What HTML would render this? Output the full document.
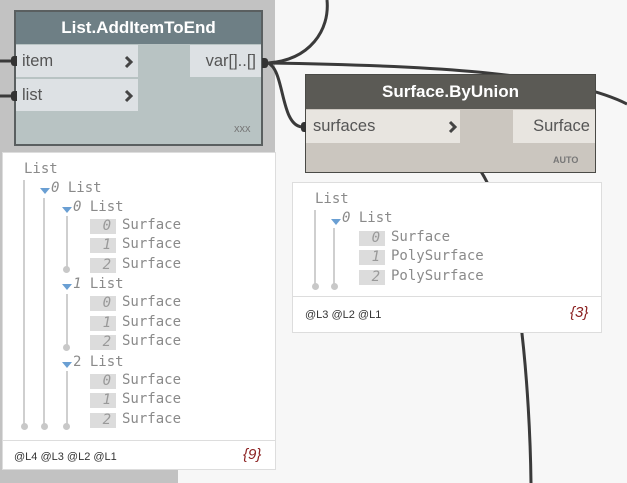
<!DOCTYPE html>
<html><head><style>
*{margin:0;padding:0;box-sizing:border-box}
body{width:627px;height:483px;overflow:hidden;background:#f7f7f7;position:relative;font-family:"Liberation Sans",sans-serif}
.a{position:absolute}
.mono{font-family:"DejaVu Sans Mono","Liberation Mono",monospace;font-size:14px;color:#8a8a8a;white-space:nowrap}
.idx{position:absolute;width:26px;height:15px;background:#dcdcdc;color:#999;font-style:italic;text-align:right;padding-right:5px;line-height:15px}
.vl{position:absolute;width:2px;background:#cfcfcf}
.dot{position:absolute;width:7px;height:7px;border-radius:50%;background:#c8c8c8}
.tri{position:absolute;width:0;height:0;border-left:5px solid transparent;border-right:5px solid transparent;border-top:6px solid #6a9fd3}
.chev{position:absolute}
.p{font-size:16.5px;color:#555}
</style></head><body>
<div class="a" style="left:0;top:0;width:275px;height:470px;background:#c2c2c2"></div>
<div class="a" style="left:0;top:0;width:178px;height:483px;background:#c2c2c2"></div>

<svg class="a" style="left:0;top:0" width="627" height="483">
<g fill="none" stroke="#3a3a3a" stroke-width="3">
<path d="M268 63 C310 60 330 30 327 0"/>
<path d="M268 63 C400 65 560 70 627 104"/>
<path d="M268 63 C285 70 280 125 302 127"/>
<path d="M480 170 C520 230 530 400 531 483"/>
<path d="M0 61 L15 61"/><path d="M0 96 L15 96"/>
</g>
</svg>

<!-- Node 1 -->
<div class="a" style="left:14px;top:10px;width:249px;height:136px;background:#b8c3c3;border:2px solid #5a5f60"></div>
<div class="a" style="left:16px;top:12px;width:245px;height:32px;background:#6e7f85;color:#fff;font-weight:bold;font-size:17px;text-align:center;line-height:32px">List.AddItemToEnd</div>
<div class="a p" style="left:16px;top:45px;width:122px;height:32px;background:#dde1e4;line-height:32px;padding-left:6px">item</div>
<div class="a p" style="left:16px;top:79px;width:122px;height:32px;background:#dde1e4;line-height:32px;padding-left:6px">list</div>
<svg class="chev" style="left:124px;top:55px" width="10" height="14"><polyline points="2,2 7,7 2,12" fill="none" stroke="#444" stroke-width="3"/></svg>
<svg class="chev" style="left:124px;top:89px" width="10" height="14"><polyline points="2,2 7,7 2,12" fill="none" stroke="#444" stroke-width="3"/></svg>
<div class="a p" style="left:190px;top:45px;width:71px;height:32px;background:#dde1e4;line-height:32px;text-align:right;padding-right:5px">var[]..[]</div>
<div class="a" style="left:234px;top:123px;font-size:11px;color:#777">xxx</div>
<div class="a" style="left:11px;top:56px;width:6px;height:10px;background:#333;border-radius:3px 0 0 3px"></div>
<div class="a" style="left:11px;top:91px;width:6px;height:10px;background:#333;border-radius:3px 0 0 3px"></div>
<div class="a" style="left:262px;top:58px;width:6px;height:10px;background:#333;border-radius:0 3px 3px 0"></div>

<!-- Preview 1 -->
<div class="a" style="left:2px;top:152px;width:274px;height:318px;background:#fff;border:1px solid #ddd"></div>
<div class="a" style="left:2px;top:440px;width:274px;height:1px;background:#ddd"></div>
<div class="mono">
<div class="a" style="left:24px;top:161px">List</div>
<div class="tri" style="left:40px;top:188px"></div><div class="a" style="left:51px;top:180px"><i>0</i> List</div>
<div class="tri" style="left:62px;top:207px"></div><div class="a" style="left:73px;top:199px"><i>0</i> List</div>
<div class="idx" style="left:90px;top:219px">0</div><div class="a" style="left:122px;top:217px">Surface</div>
<div class="idx" style="left:90px;top:238px">1</div><div class="a" style="left:122px;top:236px">Surface</div>
<div class="idx" style="left:90px;top:258px">2</div><div class="a" style="left:122px;top:256px">Surface</div>
<div class="tri" style="left:62px;top:284px"></div><div class="a" style="left:73px;top:276px"><i>1</i> List</div>
<div class="idx" style="left:90px;top:296px">0</div><div class="a" style="left:122px;top:294px">Surface</div>
<div class="idx" style="left:90px;top:316px">1</div><div class="a" style="left:122px;top:314px">Surface</div>
<div class="idx" style="left:90px;top:335px">2</div><div class="a" style="left:122px;top:333px">Surface</div>
<div class="tri" style="left:62px;top:362px"></div><div class="a" style="left:73px;top:354px">2 List</div>
<div class="idx" style="left:90px;top:374px">0</div><div class="a" style="left:122px;top:372px">Surface</div>
<div class="idx" style="left:90px;top:393px">1</div><div class="a" style="left:122px;top:391px">Surface</div>
<div class="idx" style="left:90px;top:413px">2</div><div class="a" style="left:122px;top:411px">Surface</div>
</div>
<div class="vl" style="left:23px;top:180px;height:246px"></div><div class="dot" style="left:21px;top:423px"></div>
<div class="vl" style="left:43px;top:198px;height:228px"></div><div class="dot" style="left:41px;top:423px"></div>
<div class="vl" style="left:66px;top:216px;height:52px"></div><div class="dot" style="left:63px;top:266px"></div>
<div class="vl" style="left:66px;top:294px;height:52px"></div><div class="dot" style="left:63px;top:344px"></div>
<div class="vl" style="left:66px;top:371px;height:55px"></div><div class="dot" style="left:63px;top:423px"></div>
<div class="a" style="left:14px;top:451px;font-size:11px;color:#333">@L4 @L3 @L2 @L1</div>
<div class="a" style="left:243px;top:446px;font-size:15px;font-style:italic;color:#8b2020">{9}</div>

<!-- Node 2 -->
<div class="a" style="left:305px;top:74px;width:291px;height:99px;background:#cbc6bf;border:1px solid #4a4a46"></div>
<div class="a" style="left:306px;top:75px;width:289px;height:34px;background:#5b5a55;color:#fff;font-weight:bold;font-size:17px;text-align:center;line-height:34px">Surface.ByUnion</div>
<div class="a p" style="left:306px;top:110px;width:154px;height:33px;background:#e8e5e0;line-height:33px;padding-left:7px">surfaces</div>
<svg class="chev" style="left:448px;top:120px" width="10" height="14"><polyline points="2,2 7,7 2,12" fill="none" stroke="#444" stroke-width="3"/></svg>
<div class="a p" style="left:513px;top:110px;width:82px;height:33px;background:#e8e5e0;line-height:33px;text-align:right;padding-right:5px">Surface</div>
<div class="a" style="left:553px;top:155px;font-size:9px;font-weight:bold;color:#777">AUTO</div>
<div class="a" style="left:301px;top:122px;width:5px;height:10px;background:#333;border-radius:3px 0 0 3px"></div>

<!-- Preview 2 -->
<div class="a" style="left:292px;top:182px;width:310px;height:151px;background:#fff;border:1px solid #ddd"></div>
<div class="a" style="left:292px;top:296px;width:310px;height:1px;background:#ddd"></div>
<div class="mono">
<div class="a" style="left:315px;top:191px">List</div>
<div class="tri" style="left:331px;top:219px"></div><div class="a" style="left:342px;top:210px"><i>0</i> List</div>
<div class="idx" style="left:359px;top:231px">0</div><div class="a" style="left:391px;top:229px">Surface</div>
<div class="idx" style="left:359px;top:250px">1</div><div class="a" style="left:391px;top:248px">PolySurface</div>
<div class="idx" style="left:359px;top:270px">2</div><div class="a" style="left:391px;top:268px">PolySurface</div>
</div>
<div class="vl" style="left:314px;top:210px;height:76px"></div><div class="dot" style="left:312px;top:283px"></div>
<div class="vl" style="left:333px;top:228px;height:58px"></div><div class="dot" style="left:331px;top:283px"></div>
<div class="a" style="left:305px;top:309px;font-size:11px;color:#333">@L3 @L2 @L1</div>
<div class="a" style="left:570px;top:304px;font-size:15px;font-style:italic;color:#8b2020">{3}</div>
</body></html>
